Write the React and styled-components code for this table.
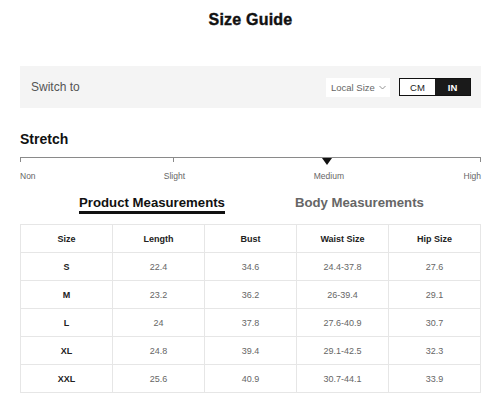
import { createGlobalStyle, styled } from "styled-components";

const GlobalStyle = createGlobalStyle`
  body {
    margin: 0;
    background: #fff;
    font-family: "Liberation Sans", Arial, sans-serif;
  }
`;

const Page = styled.div`
  width: 500px;
  height: 398px;
  box-sizing: border-box;
  padding: 10px 19px 0 20px;
  overflow: hidden;
`;

const Title = styled.h1`
  margin: 0;
  font-size: 16px;
  line-height: 20px;
  font-weight: 900;
  text-align: center;
  color: #111;
  letter-spacing: 0.2px;
  -webkit-text-stroke: 0.4px #111;
`;

const SwitchBar = styled.div`
  margin-top: 36px;
  height: 42px;
  background: #f4f4f4;
  display: flex;
  align-items: center;
  padding: 0 10px 0 11px;
`;

const SwitchLabel = styled.span`
  flex: 1;
  font-size: 12px;
  color: #555;
`;

const LocalSelect = styled.div`
  display: flex;
  align-items: center;
  gap: 4px;
  width: 64px;
  box-sizing: border-box;
  height: 19px;
  padding: 0 0 0 5px;
  background: #fff;
  font-size: 9.5px;
  color: #666;
  margin-right: 9px;
`;

const UnitToggle = styled.div`
  display: flex;
  border: 1px solid #111;
  height: 16px;
`;

const UnitButton = styled.div`
  width: 35px;
  display: flex;
  align-items: center;
  justify-content: center;
  font-size: 9.5px;
  font-weight: ${({ $active }) => ($active ? 700 : 400)};
  background: ${({ $active }) => ($active ? "#1a1a1a" : "#fff")};
  color: ${({ $active }) => ($active ? "#fff" : "#222")};
`;

const SectionTitle = styled.h2`
  margin: 22px 0 0;
  font-size: 14px;
  line-height: 18px;
  font-weight: 700;
  color: #111;
`;

const Scale = styled.div`
  position: relative;
  margin-top: 9px;
  height: 28px;
`;

const ScaleLine = styled.div`
  height: 4px;
  border-top: 1px solid #8a8a8a;
  border-left: 1px solid #8a8a8a;
  border-right: 1px solid #8a8a8a;
  display: grid;
  grid-template-columns: 1fr 2fr;
`;

const Tick = styled.div`
  border-right: 1px solid #8a8a8a;
`;

const Marker = styled.div`
  position: absolute;
  top: 1px;
  left: ${({ $pos }) => $pos}%;
  transform: translateX(-50%);
  width: 0;
  height: 0;
  border-left: 5px solid transparent;
  border-right: 5px solid transparent;
  border-top: 7px solid #111;
`;

const ScaleLabel = styled.span`
  position: absolute;
  top: 14px;
  font-size: 8.5px;
  color: #666;
  left: ${({ $pos }) => $pos}%;
  transform: translateX(${({ $pos }) => ($pos === 0 ? "0" : $pos === 100 ? "-100%" : "-50%")});
  white-space: nowrap;
`;

const Tabs = styled.div`
  display: flex;
  justify-content: center;
  gap: 70px;
  margin-top: 10px;
  padding-left: 2px;
`;

const Tab = styled.div`
  font-size: 13.2px;
  font-weight: 700;
  line-height: 16px;
  color: ${({ $active }) => ($active ? "#111" : "#666")};
  border-bottom: 3px solid ${({ $active }) => ($active ? "#111" : "transparent")};
`;

const Table = styled.table`
  margin-top: 10px;
  width: 461px;
  border-collapse: collapse;
  table-layout: fixed;
`;

const Th = styled.th`
  height: 27px;
  border: 1px solid #e6e6e6;
  font-size: 9px;
  font-weight: 700;
  color: #222;
  padding: 0;
`;

const Td = styled.td`
  height: 27px;
  border: 1px solid #e6e6e6;
  text-align: center;
  padding: 0;
  font-size: 9px;
  font-weight: ${({ $bold }) => ($bold ? 700 : 400)};
  color: ${({ $bold }) => ($bold ? "#222" : "#666")};
`;

const headers = ["Size", "Length", "Bust", "Waist Size", "Hip Size"];

const rows = [
  ["S", "22.4", "34.6", "24.4-37.8", "27.6"],
  ["M", "23.2", "36.2", "26-39.4", "29.1"],
  ["L", "24", "37.8", "27.6-40.9", "30.7"],
  ["XL", "24.8", "39.4", "29.1-42.5", "32.3"],
  ["XXL", "25.6", "40.9", "30.7-44.1", "33.9"],
];

const stretchLabels = [
  ["Non", 0],
  ["Slight", 33.5],
  ["Medium", 67],
  ["High", 100],
];

export default function App() {
  return (
    <>
      <GlobalStyle />
      <Page>
        <Title>Size Guide</Title>

        <SwitchBar>
          <SwitchLabel>Switch to</SwitchLabel>
          <LocalSelect>
            Local Size
            <svg width="7" height="5" viewBox="0 0 7 5">
              <path d="M0.5 1l3 3 3-3" fill="none" stroke="#888" strokeWidth="0.9" />
            </svg>
          </LocalSelect>
          <UnitToggle>
            <UnitButton>CM</UnitButton>
            <UnitButton $active>IN</UnitButton>
          </UnitToggle>
        </SwitchBar>

        <SectionTitle>Stretch</SectionTitle>
        <Scale>
          <ScaleLine>
            <Tick />
            <div />
          </ScaleLine>
          <Marker $pos={66.5} />
          {stretchLabels.map(([label, pos]) => (
            <ScaleLabel key={label} $pos={pos}>
              {label}
            </ScaleLabel>
          ))}
        </Scale>

        <Tabs>
          <Tab $active>Product Measurements</Tab>
          <Tab>Body Measurements</Tab>
        </Tabs>

        <Table>
          <thead>
            <tr>
              {headers.map((h) => (
                <Th key={h}>{h}</Th>
              ))}
            </tr>
          </thead>
          <tbody>
            {rows.map((row) => (
              <tr key={row[0]}>
                {row.map((cell, i) => (
                  <Td key={i} $bold={i === 0}>
                    {cell}
                  </Td>
                ))}
              </tr>
            ))}
          </tbody>
        </Table>
      </Page>
    </>
  );
}
